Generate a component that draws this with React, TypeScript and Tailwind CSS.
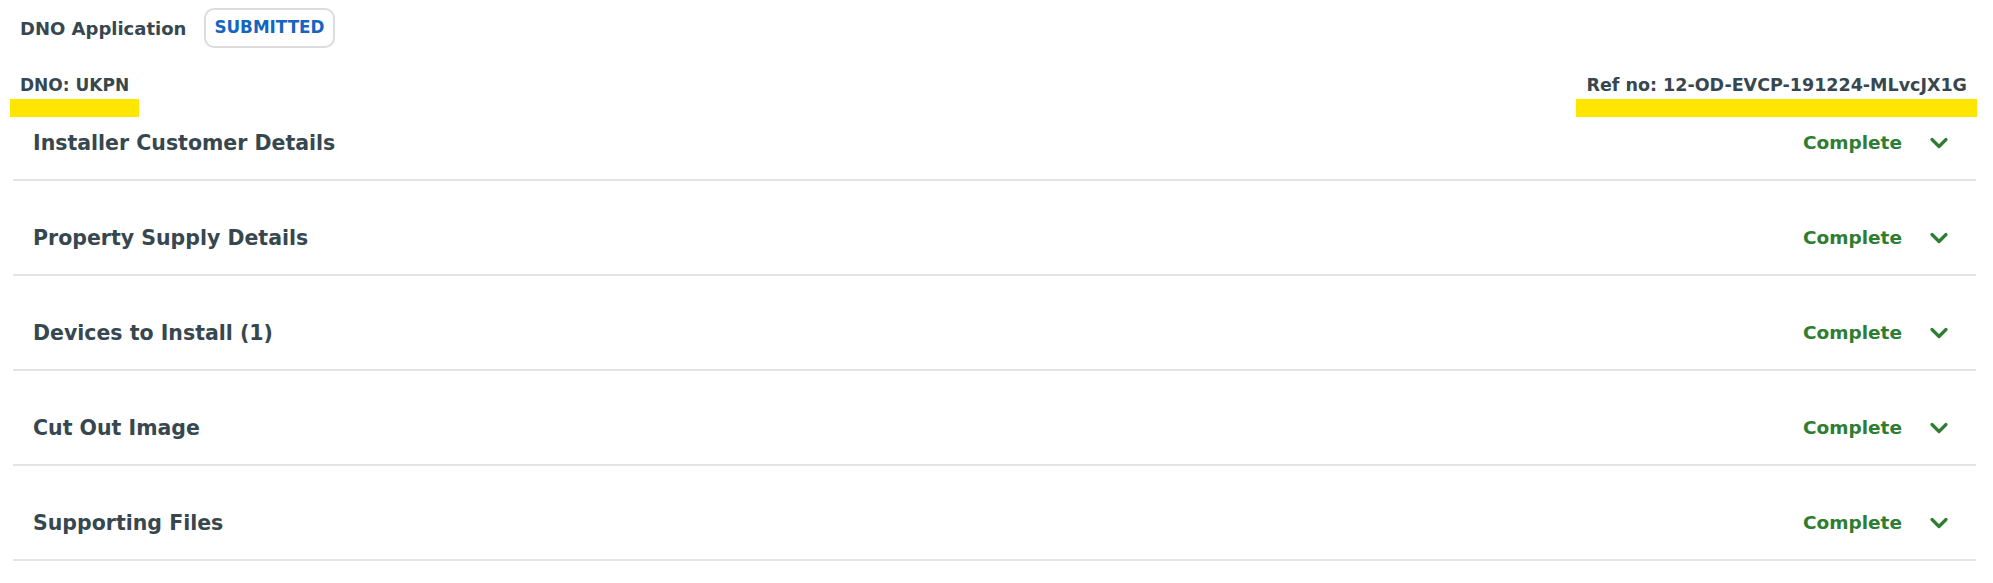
import { ChevronDown } from "lucide-react";

const sections = [
  "Installer Customer Details",
  "Property Supply Details",
  "Devices to Install (1)",
  "Cut Out Image",
  "Supporting Files",
];

const App = () => {
  return (
    <div
      className="min-h-screen w-full bg-white text-[#37474f]"
      style={{ fontFamily: "'DejaVu Sans', Inter, sans-serif" }}
    >
      <div className="flex items-center gap-[18px] pl-5 pt-2">
        <span className="text-[18px] font-bold">DNO Application</span>
        <span className="flex h-10 items-center rounded-[10px] border-2 border-[#dcdcdc] px-[8px] text-[16.8px] font-bold text-[#1565c0]">
          SUBMITTED
        </span>
      </div>

      <div className="mt-[25px] flex justify-between pl-2.5 pr-4">
        <div className="flex flex-col">
          <span className="px-2.5 text-[17px] leading-6 font-bold">
            DNO: UKPN
          </span>
          <div className="mt-0.5 h-[18px] bg-[#ffe500]" />
        </div>
        <div className="flex flex-col">
          <span className="px-2.5 text-[17.5px] leading-6 font-bold">
            Ref no: 12-OD-EVCP-191224-MLvcJX1G
          </span>
          <div className="mt-0.5 h-[18px] bg-[#ffe500]" />
        </div>
      </div>

      <div className="ml-[13px] mr-[17px]">
        {sections.map((title) => (
          <div
            key={title}
            className="flex items-center justify-between border-b-2 border-[#e4e4e4] pl-5 pr-[23px] pt-[43px] pb-[22px] first:pt-[12px]"
          >
            <span className="text-[20.5px] leading-7 font-bold">{title}</span>
            <div className="flex items-center gap-[23px]">
              <span className="text-[18.5px] font-bold text-[#2e7d32]">
                Complete
              </span>
              <ChevronDown className="h-7 w-7 text-[#2e7d32]" strokeWidth={2.75} />
            </div>
          </div>
        ))}
      </div>
    </div>
  );
};

export default App;
